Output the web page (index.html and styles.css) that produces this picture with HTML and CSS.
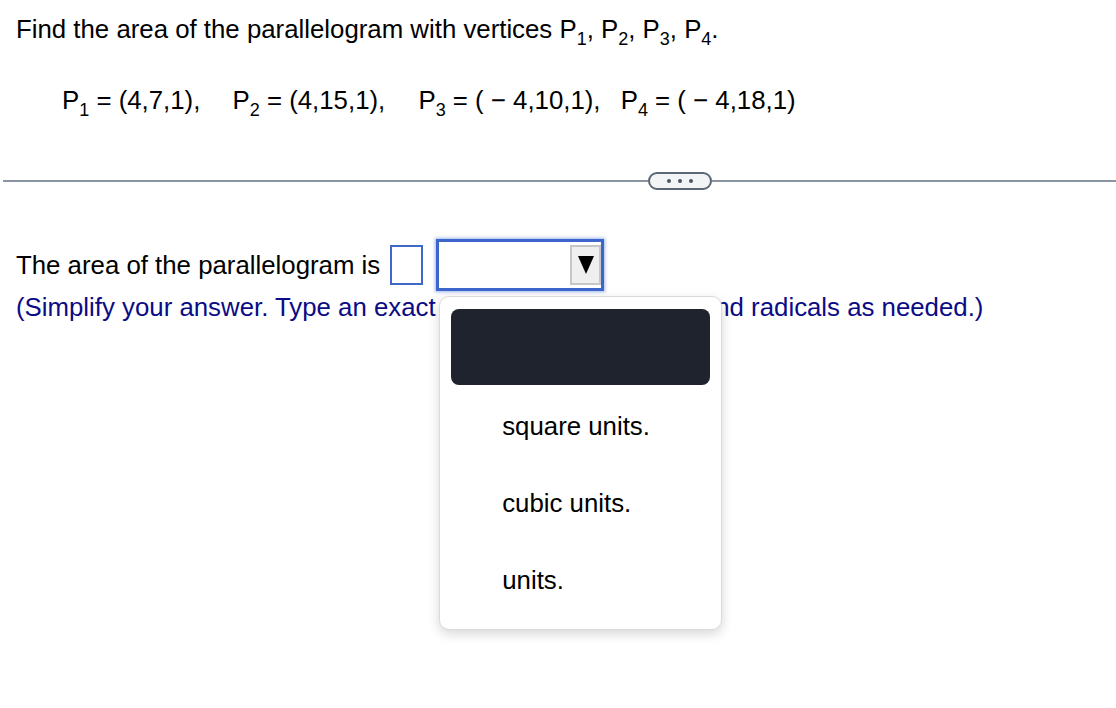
FILE: index.html
```html
<!DOCTYPE html>
<html lang="en">
<head>
    <meta charset="UTF-8">
    <meta name="viewport" content="width=device-width, initial-scale=1.0">
    <title>Parallelogram area</title>
    <link rel="stylesheet" href="styles.css">
</head>
<body>
    <div class="question">
        <p class="prompt">Find the area of the parallelogram with vertices P<sub>1</sub>, P<sub>2</sub>, P<sub>3</sub>, P<sub>4</sub>.</p>
        <p class="points">
            <span class="point p1">P<sub>1</sub> = (4,7,1),</span>
            <span class="point p2">P<sub>2</sub> = (4,15,1),</span>
            <span class="point p3">P<sub>3</sub> = ( &minus; 4,10,1),</span>
            <span class="point">P<sub>4</sub> = ( &minus; 4,18,1)</span>
        </p>
    </div>

    <div class="divider">
        <span class="rule rule-left"></span>
        <button class="more" type="button"><span></span><span></span><span></span></button>
        <span class="rule rule-right"></span>
    </div>

    <div class="answer">
        <div class="answer-line">
            <span>The area of the parallelogram is</span>
            <span class="blank"></span>
            <div class="select-wrap">
                <div class="select">
                    <span class="arrow">
                        <svg width="16" height="18" viewBox="0 0 16 18"><polygon points="0,0 16,0 8,18" fill="#000"/></svg>
                    </span>
                </div>
                <ul class="menu">
                    <li class="menu-item selected"></li>
                    <li class="menu-item">square units.</li>
                    <li class="menu-item">cubic units.</li>
                    <li class="menu-item">units.</li>
                </ul>
            </div>
        </div>
        <p class="hint">(Simplify your answer. Type an exact answer using integers and radicals as needed.)</p>
    </div>
</body>
</html>
```

FILE: styles.css
```css
* {
    margin: 0;
    padding: 0;
    box-sizing: border-box;
    font-family: 'Liberation Sans', Arial, sans-serif;
}

body {
    background-color: white;
    color: #000;
    font-size: 25.8px;
    line-height: 29px;
    padding-top: 15px;
    min-height: 100vh;
}

sub {
    font-size: 18px;
    line-height: 0;
    vertical-align: -7px;
}

.question {
    padding-left: 16px;
}

.points {
    margin-top: 42px;
    padding-left: 46px;
    white-space: nowrap;
}

.point.p1 {
    margin-right: 25px;
}

.point.p2 {
    margin-right: 26px;
}

.point.p3 {
    margin-right: 13px;
}

.divider {
    display: flex;
    align-items: center;
    margin-top: 57px;
    margin-left: 3px;
    height: 18px;
}

.rule {
    height: 2px;
    background-color: #8b95a1;
}

.rule-left {
    width: 645px;
}

.rule-right {
    flex: 1;
}

.more {
    width: 64px;
    height: 18px;
    border: 2px solid #5c6775;
    border-radius: 9px;
    background-color: #f3f4f6;
    display: flex;
    align-items: center;
    justify-content: center;
    gap: 7px;
}

.more span {
    width: 4px;
    height: 4px;
    border-radius: 50%;
    background-color: #4a5563;
}

.answer {
    padding-left: 16px;
    margin-top: 49px;
}

.answer-line {
    display: flex;
    align-items: center;
    height: 52px;
    white-space: nowrap;
}

.blank {
    width: 33px;
    height: 40px;
    margin-left: 10px;
    border: 2px solid #3f68c9;
    background-color: white;
}

.select-wrap {
    position: relative;
    margin-left: 13px;
}

.select {
    width: 168px;
    height: 52px;
    border: 3px solid #3c66cc;
    box-shadow: 0 0 3px 1px rgba(80, 120, 220, 0.55);
    background-color: white;
    display: flex;
    justify-content: flex-end;
    padding-top: 3px;
}

.arrow {
    width: 31px;
    height: 40px;
    border: 2px solid #c6c6c6;
    background-color: #efefef;
    display: flex;
    align-items: center;
    justify-content: center;
}

.menu {
    position: absolute;
    left: 3px;
    top: 57px;
    z-index: 2;
    width: 283px;
    list-style: none;
    padding: 12px 11px;
    background-color: white;
    border: 1px solid #dadada;
    border-radius: 10px;
    box-shadow: 0 4px 12px rgba(0, 0, 0, 0.16);
}

.menu-item {
    height: 77px;
    line-height: 80px;
    padding-left: 51px;
    color: #000;
    font-size: 25.8px;
}

.menu-item.selected {
    background-color: #1f232d;
    border-radius: 8px;
    height: 76px;
    margin-bottom: 1px;
}

.hint {
    margin-top: 2px;
    color: #0b0b86;
    white-space: nowrap;
}
```
